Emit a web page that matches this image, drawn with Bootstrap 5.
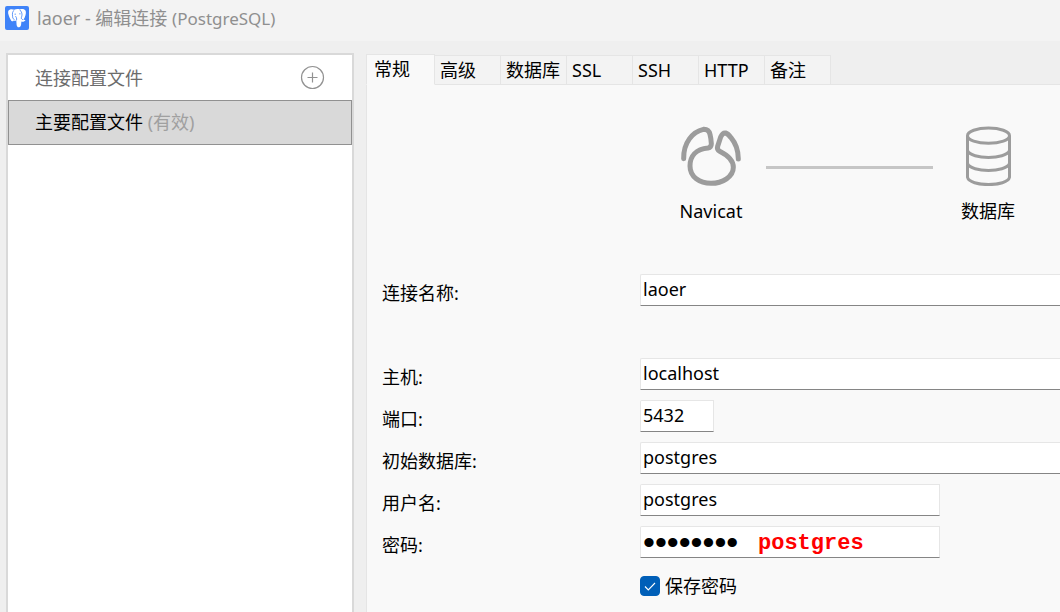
<!DOCTYPE html>
<html lang="zh-CN">
<head>
<meta charset="utf-8">
<meta name="viewport" content="width=device-width, initial-scale=1">
<title>laoer - 编辑连接 (PostgreSQL)</title>
<link href="https://cdn.jsdelivr.net/npm/bootstrap@5.3.0/dist/css/bootstrap.min.css" rel="stylesheet">
<style>
  body { background: #efefef; color: #000; font: 18px/24px "Noto Sans", "Noto Sans CJK SC", sans-serif; }
  .title-bar { height: 41px; padding: 0 5px 5px; background: #f3f3f3; color: #8f8f8f; }
  .title-bar .product { font-size: 17px; }
  .workspace { padding: 12px 0 0 6px; gap: 12px; }
  .profiles { flex: 0 0 348px; background: #fff; border: 2px solid #d9d9d9; border-bottom: 0; }
  .profiles-head { height: 45px; padding: 0 27px; color: #6c6c6c; }
  .profile-item { height: 45px; padding: 0 26px 2px; background: #d9d9d9; border: 1px solid #919191; text-align: left; color: #000; }
  .hint { color: #a0a0a0; }
  .settings { min-width: 0; }
  .settings .nav-tabs { border: 0; padding-top: 1px; align-items: flex-end; box-shadow: inset 0 -1px #e5e5e5; }
  .settings .nav-link { width: 66px; height: 30px; margin: 0; padding: 0 0 0 5px; border: 1px solid #e5e5e5; border-left: 0; border-radius: 0; background: #f3f3f3; color: #000; text-align: left; white-space: nowrap; }
  .settings .nav-link.active { width: 69px; height: 31px; padding: 0 0 2px 7px; background: #f9f9f9; border: 1px solid #e5e5e5; border-bottom-color: #f9f9f9; color: #000; }
  .settings .tab-content { background: #f9f9f9; border-left: 1px solid #e5e5e5; }
  .route { padding: 41px 0 0 302px; margin-bottom: 51px; }
  .endpoint { width: 84px; gap: 13px; }
  .route-line { width: 167px; height: 3px; margin: 40px 13px 0; background: #c6c6c6; }
  .field-row { display: grid; grid-template-columns: 258px minmax(0, 1fr); margin-bottom: 10px; padding-left: 15px; }
  .field-row > label { padding-top: 7px; }
  .field-row .form-control { height: 32px; padding: 0 2px 3px; border: 1px solid #e6e6e6; border-bottom-color: #858585; border-radius: 2px 0 0 0; background: #fff; color: #000; font-size: 18px; line-height: 24px; }
  .field-row .to-edge { border-right: 0; }
  .field-row .port { width: 74px; }
  .credential { width: 300px; }
  .field-row input[type=password] { font-family: "Liberation Sans", sans-serif; font-size: 34px; padding: 0 2px; }
  .note { left: 118px; top: 6px; color: #f00; font: bold 22px/24px "Liberation Mono", monospace; }
  .save-row .choice { gap: 5px; padding-top: 6px; }
  .save-row .form-check-input { width: 20px; height: 20px; margin: 0; border-radius: 4px; }
  .save-row .form-check-input:checked { border-color: #005fb8; background-color: #005fb8; background-size: 20px 20px; background-image: url("data:image/svg+xml,%3csvg xmlns='http://www.w3.org/2000/svg' viewBox='0 0 20 20'%3e%3cpath d='M5 10.5 8.3 14 15 7' fill='none' stroke='%23fff' stroke-width='1.1'/%3e%3c/svg%3e"); }
</style>
</head>
<body class="min-vh-100 d-flex flex-column">
<header class="title-bar d-flex align-items-center gap-2">
  <svg width="24" height="24" viewBox="0 0 24 24" aria-hidden="true">
    <rect width="24" height="24" rx="2" fill="#3f83f8"/>
    <path fill="#fff" d="M3.2 5.2C4.2 3 7 2.8 9.2 3.7c1.7-.8 4-.9 5.7-.2 2-.9 4.800-.5 5.800 1.500.7 2.200-.5 6.300-2.300 8.700l2.100.2c-.7 1.500-2.600 2.200-4.100 1.500-.3 2.300-.1 4.900-1.700 5.700-1.800.7-2.900-.5-3.100-2.400l-.3-4.100c-1.200.4-1.900.3-2.600-.2-.8 1.400-2.200 1-3-.7C4.300 11.100 2.600 7.400 3.200 5.200z"/>
    <path fill="none" stroke="#3f83f8" stroke-width=".8" d="M8.800 4.300c-2.200 2.500-1.200 5.200-1 7.700l1.600 1.900M14.900 4c2.600 2.700 2.500 5.300 1.200 8.200l1.800 1.700M11.500 14.300c.5-1.800-.2-3.300-1.200-4.300"/>
    <path fill="#3f83f8" d="M9.500 7.700h1.500v.9H9.500zM14.100 7.400h1.500v.9h-1.500z"/>
  </svg>
  <span>laoer - 编辑连接 <span class="product">(PostgreSQL)</span></span>
</header>
<main class="workspace d-flex flex-grow-1">
  <aside class="profiles">
    <div class="profiles-head d-flex align-items-center justify-content-between">
      <span>连接配置文件</span>
      <button type="button" class="btn p-0 border-0 d-flex" aria-label="添加配置文件">
        <svg width="25" height="25" viewBox="0 0 25 25" fill="none" stroke="#929292" stroke-width="1.200"><circle cx="12.500" cy="12.500" r="11"/><path d="M12.500 7.500v10M7.500 12.500h10"/></svg>
      </button>
    </div>
    <button type="button" class="profile-item w-100">主要配置文件 <span class="hint">(有效)</span></button>
  </aside>
  <section class="settings flex-grow-1 d-flex flex-column">
    <div class="nav nav-tabs" role="tablist">
      <button type="button" class="nav-link active" role="tab" aria-selected="true">常规</button>
      <button type="button" class="nav-link" role="tab">高级</button>
      <button type="button" class="nav-link" role="tab">数据库</button>
      <button type="button" class="nav-link" role="tab">SSL</button>
      <button type="button" class="nav-link" role="tab">SSH</button>
      <button type="button" class="nav-link" role="tab">HTTP</button>
      <button type="button" class="nav-link" role="tab">备注</button>
    </div>
    <form class="tab-content flex-grow-1">
      <div class="route d-flex">
        <div class="endpoint d-flex flex-column align-items-center">
          <svg width="62" height="60" viewBox="60 48 186 180" fill="none" stroke="#9c9c9c" stroke-width="15" stroke-linecap="round" stroke-linejoin="round" aria-hidden="true">
            <path d="M71 146C70 98 98 65 130 58Q146 57 150 73 153 84 154 101 154 112 144 114C108 117 90 139 90 168 90 201 119 220 153 220 188 220 220 200 220 172 220 151 201 135 179 124Q170 119 173 109L182 81Q188 67 197 69 204 71 213 83C229 102 235 120 235 147"/>
          </svg>
          <span>Navicat</span>
        </div>
        <div class="route-line"></div>
        <div class="endpoint d-flex flex-column align-items-center">
          <svg width="45" height="60" viewBox="198 48 135 180" fill="none" stroke="#9c9c9c" stroke-width="9" aria-hidden="true">
            <ellipse cx="265.500" cy="77" rx="63" ry="23"/>
            <path d="M202.500 77V202C208 231 323 231 328.500 202V77M202.500 122C214 149 317 149 328.500 122M202.500 161C214 188 317 188 328.500 161"/>
          </svg>
          <span>数据库</span>
        </div>
      </div>
      <div class="field-row mb-0">
        <label for="name">连接名称:</label>
        <input id="name" class="form-control to-edge" type="text" value="laoer">
      </div>
      <div class="field-row mt-5 pt-1">
        <label for="host">主机:</label>
        <input id="host" class="form-control to-edge" type="text" value="localhost">
      </div>
      <div class="field-row">
        <label for="port">端口:</label>
        <input id="port" class="form-control port" type="text" value="5432">
      </div>
      <div class="field-row">
        <label for="database">初始数据库:</label>
        <input id="database" class="form-control to-edge" type="text" value="postgres">
      </div>
      <div class="field-row">
        <label for="user">用户名:</label>
        <input id="user" class="form-control credential" type="text" value="postgres">
      </div>
      <div class="field-row">
        <label for="password">密码:</label>
        <div class="credential position-relative">
          <input id="password" class="form-control" type="password" value="postgres">
          <span class="note position-absolute">postgres</span>
        </div>
      </div>
      <div class="field-row save-row">
        <div></div>
        <div class="choice d-flex align-items-center">
          <input id="save" class="form-check-input" type="checkbox" checked>
          <label for="save">保存密码</label>
        </div>
      </div>
    </form>
  </section>
</main>
<script src="https://cdn.jsdelivr.net/npm/bootstrap@5.3.0/dist/js/bootstrap.bundle.min.js"></script>
</body>
</html>
